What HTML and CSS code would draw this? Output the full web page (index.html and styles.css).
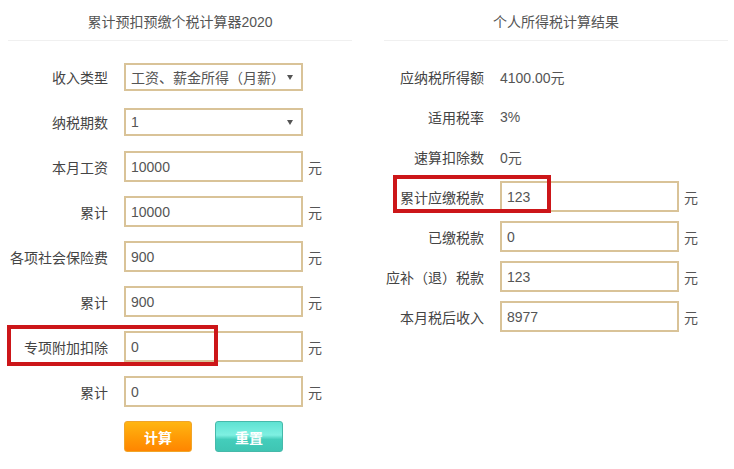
FILE: index.html
```html
<!DOCTYPE html>
<html lang="zh-CN">
<head>
<meta charset="utf-8">
<title>个税计算器</title>
<link rel="stylesheet" href="styles.css">
</head>
<body>
<div class="page">
  <section class="panel">
    <h2 class="panel-title">累计预扣预缴个税计算器2020</h2>
    <div class="form">
      <div class="row">
        <label class="label">收入类型</label>
        <div class="select"><span class="cjk-full">工资、薪金所得（月薪）</span></div>
      </div>
      <div class="row">
        <label class="label">纳税期数</label>
        <div class="select"><span>1</span></div>
      </div>
      <div class="row">
        <label class="label">本月工资</label>
        <div class="field">10000</div>
        <span class="unit">元</span>
      </div>
      <div class="row">
        <label class="label">累计</label>
        <div class="field">10000</div>
        <span class="unit">元</span>
      </div>
      <div class="row">
        <label class="label">各项社会保险费</label>
        <div class="field">900</div>
        <span class="unit">元</span>
      </div>
      <div class="row">
        <label class="label">累计</label>
        <div class="field">900</div>
        <span class="unit">元</span>
      </div>
      <div class="row">
        <label class="label">专项附加扣除</label>
        <div class="field">0</div>
        <span class="unit">元</span>
        <span class="mark mark-left"></span>
      </div>
      <div class="row">
        <label class="label">累计</label>
        <div class="field">0</div>
        <span class="unit">元</span>
      </div>
      <div class="row actions">
        <span class="label"></span>
        <button class="btn btn-calc">计算</button>
        <button class="btn btn-reset">重置</button>
      </div>
    </div>
  </section>

  <section class="panel">
    <h2 class="panel-title">个人所得税计算结果</h2>
    <div class="form result">
      <div class="row">
        <span class="label">应纳税所得额</span>
        <span class="value">4100.00元</span>
      </div>
      <div class="row">
        <span class="label">适用税率</span>
        <span class="value">3%</span>
      </div>
      <div class="row">
        <span class="label">速算扣除数</span>
        <span class="value">0元</span>
      </div>
      <div class="row">
        <span class="label">累计应缴税款</span>
        <div class="field">123</div>
        <span class="unit">元</span>
        <span class="mark mark-right"></span>
      </div>
      <div class="row">
        <span class="label">已缴税款</span>
        <div class="field">0</div>
        <span class="unit">元</span>
      </div>
      <div class="row">
        <span class="label">应补（退）税款</span>
        <div class="field">123</div>
        <span class="unit">元</span>
      </div>
      <div class="row">
        <span class="label">本月税后收入</span>
        <div class="field">8977</div>
        <span class="unit">元</span>
      </div>
    </div>
  </section>
</div>
</body>
</html>
```

FILE: styles.css
```css
* {
  box-sizing: border-box;
}

html, body {
  margin: 0;
  padding: 0;
  background: #fff;
}

body {
  font-family: "Liberation Sans", "Noto Sans CJK SC", sans-serif;
  font-size: 14px;
  color: #444;
  text-spacing-trim: space-all;
}

.page {
  display: flex;
  gap: 32px;
  padding: 0 7px 0 8px;
}

.panel {
  width: 344px;
  flex: none;
}

.panel-title {
  margin: 0;
  padding: 12px 0 8px;
  line-height: 20px;
  font-size: 14px;
  font-weight: normal;
  text-align: center;
  color: #555;
  border-bottom: 1px solid #f0f0f0;
}

.form {
  display: flex;
  flex-direction: column;
  gap: 14px;
  padding-top: 20px;
}

.form.result {
  gap: 9px;
}

.row {
  position: relative;
  display: flex;
  align-items: center;
  height: 31px;
}

.label {
  flex: none;
  width: 100px;
  margin-right: 16px;
  text-align: right;
  color: #444;
  white-space: nowrap;
}

.value {
  color: #555;
}

.field,
.select {
  flex: none;
  width: 179px;
  height: 31px;
  border: 2px solid #d9c398;
  background: #fff;
  padding: 0 5px;
  display: flex;
  align-items: center;
  color: #555;
  white-space: nowrap;
}

.select {
  height: 28px;
  position: relative;
}

.select::after {
  content: "";
  position: absolute;
  right: 8px;
  top: 50%;
  margin-top: -2px;
  border-left: 3px solid transparent;
  border-right: 3px solid transparent;
  border-top: 5px solid #555;
}

/* keep full-width punctuation at a full em */
.cjk-full {
  font-family: "Noto Sans CJK SC", sans-serif;
  font-feature-settings: "fwid";
}

.unit {
  margin-left: 5px;
  color: #555;
}

.actions {
  gap: 0;
}

.btn {
  width: 68px;
  height: 31px;
  border-radius: 3px;
  font-family: inherit;
  font-size: 14px;
  font-weight: bold;
  color: #fff;
  padding: 0;
  cursor: pointer;
}

.btn-calc {
  border: 1px solid #f0a52a;
  background: linear-gradient(#ffb612, #ff9a06 55%, #ff8500);
}

.btn-reset {
  margin-left: 23px;
  border: 1px solid #46b9aa;
  background: linear-gradient(#5ee2d2, #7ff0e2 45%, #44cdbb 60%, #3fc5b3);
}

/* red highlight frames drawn over a row */
.mark {
  position: absolute;
  border: 4px solid #cc1619;
  pointer-events: none;
}

.mark-left {
  left: -1px;
  top: -6px;
  width: 211px;
  height: 41px;
}

.mark-right {
  left: 9px;
  top: -6px;
  width: 158px;
  height: 38px;
}
```
